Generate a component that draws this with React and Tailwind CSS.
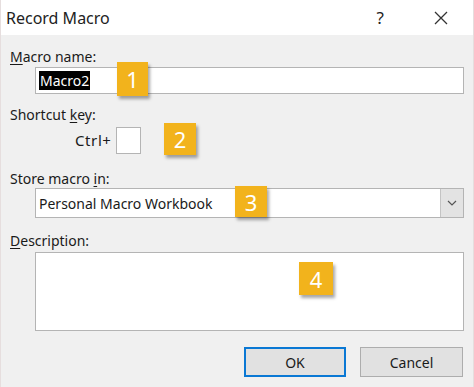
import React from "react";

function Badge({ n, className }) {
  return (
    <div
      className={`absolute flex items-center justify-center bg-[#f2b31c] text-white text-[22px] leading-none font-['Noto_Sans',sans-serif] shadow-[2px_3px_3px_rgba(0,0,0,0.35)] ${className}`}
    >
      {n}
    </div>
  );
}

export default function App() {
  return (
    <div className="relative w-[474px] h-[387px] overflow-hidden bg-[#f0f0f0] font-['Noto_Sans',sans-serif] text-[14px] text-[#1a1a1a] border-x border-[#e6dede]">
      {/* Title bar */}
      <div className="h-[35px] bg-white flex items-center pl-[5px] text-[16px] text-[#222]">
        <span className="leading-none mt-[1px]">Record Macro</span>
        <div className="ml-auto flex items-center">
          <span className="text-[17px] leading-none mr-[50px]">?</span>
          <svg width="14" height="14" viewBox="0 0 14 14" className="mr-[25px]">
            <path d="M1 1 L13 13 M13 1 L1 13" stroke="#333" strokeWidth="1.3" fill="none" />
          </svg>
        </div>
      </div>

      {/* Body */}
      <div className="flex flex-col pl-[9px] pr-[9px]">
        <div className="mt-[13px] h-[18px] leading-[18px]">
          <u className="underline-offset-2">M</u>acro name:
        </div>
        <div className="mt-[1px] ml-[25px] h-[27px] bg-white border border-[#b4b4b4] flex items-center pl-[3px]">
          <span className="bg-black text-white leading-[19px] px-[1px]">Macro2</span>
        </div>

        <div className="mt-[12px] h-[18px] leading-[18px]">
          Shortcut <u className="underline-offset-2">k</u>ey:
        </div>
        <div className="mt-[3px] h-[27px] flex items-center ml-[65px]">
          <span className="text-[15px] tracking-[0.6px]">Ctrl+</span>
          <div className="ml-[4px] w-[25px] h-[27px] bg-white border border-[#b4b4b4]" />
        </div>

        <div className="mt-[16px] h-[18px] leading-[18px]">
          Store macro <u className="underline-offset-2">i</u>n:
        </div>
        <div className="mt-0 ml-[25px] h-[30px] bg-white border border-[#b4b4b4] flex items-stretch">
          <div className="flex-1 flex items-center pl-[3px]">Personal Macro Workbook</div>
          <div className="w-[23px] bg-[#e3e3e3] border-l border-[#c4c4c4] flex items-center justify-center">
            <svg width="10" height="6" viewBox="0 0 10 6">
              <path d="M1 1 L5 5 L9 1" stroke="#555" strokeWidth="1.2" fill="none" />
            </svg>
          </div>
        </div>

        <div className="mt-[14px] h-[18px] leading-[18px]">
          <u className="underline-offset-2">D</u>escription:
        </div>
        <div className="mt-[2px] ml-[25px] h-[79px] bg-white border border-[#b4b4b4]" />

        <div className="mt-[16px] flex justify-end gap-[14px] pr-[1px]">
          <div className="w-[102px] h-[30px] bg-[#e1e1e1] border-2 border-[#0a78d4] flex items-center justify-center">
            OK
          </div>
          <div className="w-[103px] h-[30px] bg-[#e1e1e1] border border-[#adadad] flex items-center justify-center">
            Cancel
          </div>
        </div>
      </div>

      <Badge n="1" className="left-[116px] top-[62px] w-[31px] h-[34px]" />
      <Badge n="2" className="left-[163px] top-[123px] w-[32px] h-[32px]" />
      <Badge n="3" className="left-[234px] top-[186px] w-[32px] h-[31px]" />
      <Badge n="4" className="left-[298px] top-[262px] w-[34px] h-[33px]" />
    </div>
  );
}
